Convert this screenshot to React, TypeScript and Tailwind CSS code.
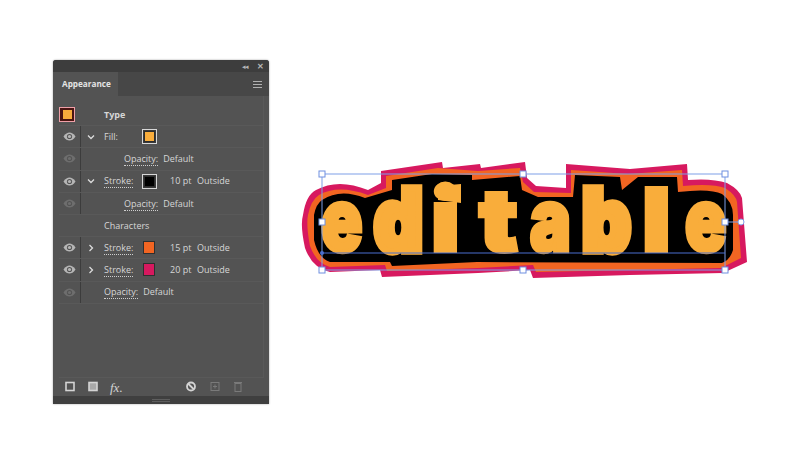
const labelFont = "font-['Open_Sans',sans-serif]";

function EyeIcon({ dim }: { dim?: boolean }) {
  return (
    <svg width="13" height="9" viewBox="0 0 13 9" className={dim ? "opacity-20" : "opacity-75"}>
      <path d="M0.5 4.5C2.5 1.5 4.5 0.5 6.5 0.5s4 1 6 4c-2 3-4 4-6 4s-4-1-6-4z" fill="#d8d8d8" />
      <circle cx="6.5" cy="4.5" r="2.6" fill="#535353" />
      <circle cx="6.5" cy="4.5" r="1.6" fill="#d8d8d8" />
    </svg>
  );
}

function Chevron({ open }: { open?: boolean }) {
  return (
    <svg width="8" height="8" viewBox="0 0 8 8" fill="none" stroke="#dcdcdc" strokeWidth="1.3">
      {open ? <path d="M1 2.5l3 3 3-3" /> : <path d="M2.5 1l3 3-3 3" />}
    </svg>
  );
}

function Swatch({ color, framed }: { color: string; framed?: boolean }) {
  return framed ? (
    <div className="flex h-[15px] w-[15px] items-center justify-center border border-[#d8d8d8] bg-[#3a3a3a]">
      <div className="h-[11px] w-[11px] border border-[#2c2c2c]" style={{ backgroundColor: color }} />
    </div>
  ) : (
    <div className="h-[13px] w-[12px] border border-[#2f2f2f]" style={{ backgroundColor: color }} />
  );
}

type RowProps = {
  eye?: "on" | "dim";
  chevron?: "open" | "closed";
  label?: string;
  indent?: boolean;
  swatch?: string;
  framed?: boolean;
  size?: string;
  value?: string;
  dotted?: boolean;
};

function Row({ eye, chevron, label, indent, swatch, framed, size, value, dotted = true }: RowProps) {
  return (
    <div className="flex h-[22.2px] items-center border-b border-[#595959]">
      <div className="flex h-full w-[21px] items-center justify-center">{eye && <EyeIcon dim={eye === "dim"} />}</div>
      <div className={`flex h-full w-[24px] items-center justify-center pr-[4px] ${eye ? "border-l border-[#3c3c3c]" : ""}`}>
        {chevron && <Chevron open={chevron === "open"} />}
      </div>
      <div className={`flex items-center text-[9px] text-[#d6d6d6] ${labelFont} ${indent ? "pl-[20px]" : ""}`}>
        <span className={`${swatch ? "w-[28px]" : ""}`}>
          <span className={dotted ? "border-b border-dotted border-[#cfcfcf] leading-[11px]" : ""}>{label}</span>
        </span>
        {swatch && (
          <div className="ml-[9px] flex w-[16px] justify-center">
            <Swatch color={swatch} framed={framed} />
          </div>
        )}
        {size && <span className="ml-[13px] w-[27px]">{size}</span>}
        {value && <span className={swatch ? "" : "ml-[5px]"}>{value}</span>}
      </div>
    </div>
  );
}

function AppearancePanel() {
  return (
    <div className="flex h-[344px] w-[216px] flex-col rounded-t-[3px] bg-[#535353] shadow-[0_0_2px_rgba(0,0,0,0.4)]">
      <div className="flex h-[12px] items-center justify-end gap-[9px] rounded-t-[3px] bg-[#3d3d3d] pr-[5px]">
        <span className="text-[7px] leading-none tracking-[-1px] text-[#b5b5b5]">◂◂</span>
        <span className="text-[8px] font-bold leading-none text-[#b5b5b5]">✕</span>
      </div>
      <div className="flex h-[24px] items-stretch justify-between bg-[#474747]">
        <div className={`flex w-[65px] items-center bg-[#535353] pl-[9px] text-[8.2px] font-bold text-[#e4e4e4] ${labelFont}`}>
          Appearance
        </div>
        <div className="flex flex-col justify-center gap-[2px] pr-[7px]">
          <div className="h-px w-[9px] bg-[#b0b0b0]" />
          <div className="h-px w-[9px] bg-[#b0b0b0]" />
          <div className="h-px w-[9px] bg-[#b0b0b0]" />
        </div>
      </div>

      <div className="mr-[5px] ml-[6px] flex-1 border-r border-b border-[#595959] pt-[8px]">
        <div className="flex h-[22.2px] items-center border-b border-[#595959]">
          <div className="flex h-[15px] w-[16px] items-center justify-center border border-[#f0a0a8] bg-[#4a1512]">
            <div className="h-[9px] w-[9px] bg-[#f8ac3c]" />
          </div>
          <span className={`ml-[29px] text-[9px] font-bold text-[#d6d6d6] ${labelFont}`}>Type</span>
        </div>
        <Row eye="on" chevron="open" label="Fill:" swatch="#f9ad3b" framed dotted={false} />
        <Row eye="dim" label="Opacity:" indent value="Default" />
        <Row eye="on" chevron="open" label="Stroke:" swatch="#000000" framed size="10 pt" value="Outside" />
        <Row eye="dim" label="Opacity:" indent value="Default" />
        <Row label="Characters" dotted={false} />
        <Row eye="on" chevron="closed" label="Stroke:" swatch="#f26522" size="15 pt" value="Outside" />
        <Row eye="on" chevron="closed" label="Stroke:" swatch="#d7195f" size="20 pt" value="Outside" />
        <Row eye="dim" label="Opacity:" value="Default" />
      </div>

      <div className="flex h-[18px] items-center pl-[12px]">
        <svg width="40" height="14" viewBox="0 0 40 14">
          <rect x="1" y="2.5" width="8" height="8" fill="none" stroke="#d4d4d4" strokeWidth="1.6" />
          <rect x="24" y="2.5" width="8" height="8" fill="#a8a8a8" stroke="#d4d4d4" strokeWidth="1.6" />
        </svg>
        <span className="ml-[5px] font-['Liberation_Serif',serif] text-[13px] italic leading-none text-[#d4d4d4]">fx.</span>
        <svg width="70" height="14" viewBox="120 0 70 14" className="ml-[62px]">
          <circle cx="126" cy="6.5" r="4" fill="none" stroke="#d4d4d4" strokeWidth="1.8" />
          <path d="M123 3.5l6 6" stroke="#d4d4d4" strokeWidth="1.8" />
          <g opacity="0.3" fill="none" stroke="#d4d4d4">
            <rect x="146" y="2.5" width="8" height="8" />
            <path d="M150 4.5v4M148 6.5h4" />
            <rect x="170" y="3.5" width="6" height="8" />
            <path d="M169 2.5h8" />
          </g>
        </svg>
      </div>
      <div className="flex h-[8px] items-center justify-center bg-[#3f3f3f]">
        <div className="h-[3px] w-[18px] border-y border-[#5e5e5e]" />
      </div>
    </div>
  );
}

// letter, x, horizontal scale, vertical scale, stroke
const LETTERS: [string, number, number, number, number][] = [
  ["e", 321, 0.95, 1.2, 4],
  ["d", 374, 1.05, 1.2, 7],
  ["i", 431, 1.35, 1.2, 4],
  ["t", 479, 1.35, 1.2, 4],
  ["a", 530, 0.95, 1.2, 4],
  ["b", 582, 1.05, 1.2, 7],
  ["l", 642, 1.35, 1.2, 4],
  ["e", 685, 0.95, 1.2, 4],
];

const PINK_BACK =
  "M381 171L442 162L443 168L480 164L481 168L525 162L527 178L536 186L566 188L566 164L630 169L687 164L688 180Q712 178 727 183Q740 190 742 198L747 262L723 273L630 275L533 278L530 270L478 273L382 277L380 270L330 272Q312 268 305 248Q300 225 303 215Q306 195 316 190Q338 178 368 190L381 183Z";
const ORANGE_BACK =
  "M386 176L438 168L478 171L520 168L523 182L534 192L571 193L571 170L628 174L682 170L683 186Q712 183 725 188Q736 195 737 202L741 258L721 268L630 270L536 272L533 265L478 268L387 271L385 265L330 267Q316 263 310 246Q306 225 308 215Q311 200 319 195Q338 184 368 195L386 188Z";
const BLACK_BACK =
  "M392 180L432 174L472 175L472 180L520 176L522 190L538 197L573 197L575 175L620 177L622 190L638 177L677 177L678 192Q710 188 722 194Q733 202 733 215L733 250Q730 260 722 263L477 262L392 266L390 262L330 262Q318 258 314 240L314 215Q316 204 322 200Q340 188 365 198L392 190Z";

function EditableArt() {
  const handles = [
    [322, 174], [523, 174], [725, 174],
    [322, 222], [725, 222],
    [322, 270], [523, 270], [725, 270],
  ];
  return (
    <svg width="470" height="140" viewBox="290 150 470 140" className="mt-[150px] ml-[21px]">
      <path d={PINK_BACK} fill="#d7195f" />
      <path d={ORANGE_BACK} fill="#f26522" />
      <path d={BLACK_BACK} fill="#000000" />
      {LETTERS.map(([ch, x, sx, sy, width], i) => (
        <text
          key={i}
          transform={`translate(${x} 251) scale(${sx} ${sy})`}
          fontFamily="Inter, sans-serif"
          fontWeight="900"
          fontSize="72"
          fill="#f9ad3b"
          stroke="#f9ad3b"
          strokeWidth={width}
          strokeLinejoin="miter"
          vectorEffect="non-scaling-stroke"
        >
          {ch}
        </text>
      ))}
      {/* the i's dot is square in the picture */}
      <polygon points="438,186 461,184 461,203 438,200" fill="#f9ad3b" />
      <rect x="322" y="174" width="403" height="96" fill="none" stroke="#7f9fe8" strokeWidth="1" />
      <path d="M322 253H725" stroke="#4a6fd0" strokeWidth="1.2" />
      <circle cx="322" cy="253" r="2" fill="#4a6fd0" />
      <path d="M725 222H741" stroke="#7f9fe8" />
      <circle cx="741" cy="222" r="3" fill="#fff" stroke="#7f9fe8" />
      {handles.map(([x, y]) => (
        <rect key={`${x}-${y}`} x={x - 3} y={y - 3} width="6" height="6" fill="#fff" stroke="#6f8fe0" />
      ))}
    </svg>
  );
}

export default function App() {
  return (
    <div className="flex h-[450px] w-[800px] items-start overflow-hidden bg-white">
      <div className="mt-[60px] ml-[53px]">
        <AppearancePanel />
      </div>
      <EditableArt />
    </div>
  );
}
